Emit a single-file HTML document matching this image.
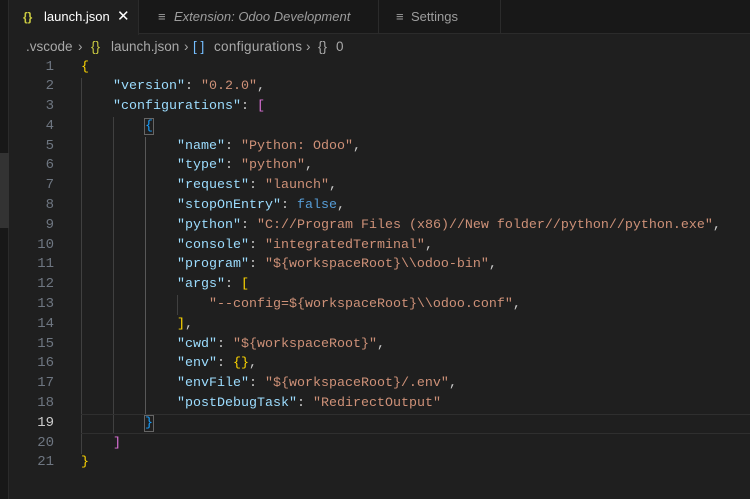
<!DOCTYPE html>
<html><head><style>
*{margin:0;padding:0;box-sizing:border-box}
body{width:750px;height:499px;background:#1f1f1f;overflow:hidden;position:relative;font-family:"Liberation Sans",sans-serif}
.left{position:absolute;left:0;top:0;width:9px;height:499px;background:#181818;border-right:1px solid #2b2b2b}
.sb{position:absolute;left:0;top:153px;width:9px;height:75px;background:#333}
.tabs{position:absolute;left:9px;top:0;width:741px;height:34px;background:#181818;border-bottom:1px solid #2b2b2b}
.tab{position:absolute;top:0;height:34px;font-size:13px;line-height:34px;color:#9d9d9d;border-right:1px solid #2b2b2b}
.t1{left:0;width:130px;background:#1f1f1f;color:#fff;height:35px}
.t2{left:130px;width:240px;font-style:italic}
.t3{left:370px;width:122px}
.br{position:absolute;top:37px;font-size:13.5px;color:#a9a9a9;line-height:20px;white-space:pre}
.br span{position:absolute;top:0}
.y{color:#cbcb41}.bl{color:#75beff}
.code{position:absolute;left:0;top:57.5px;font-family:"Liberation Mono",monospace;font-size:13.33px}
.l{height:19.8px;line-height:19.8px;white-space:pre;position:relative}
.n{position:absolute;left:0;width:54px;text-align:right;color:#6e7681;font-size:14px}
.c{position:absolute;left:81px;color:#ccc}
.k{color:#9cdcfe}.s{color:#ce9178}.b{color:#569cd6}
.g{position:absolute;width:1px;background:#404040}
</style></head><body>
<div class="left"></div><div class="sb"></div>
<div class="tabs">
<div class="tab t1"><span class="y" style="position:absolute;left:14px;font-weight:bold;font-size:12px">{}</span><span style="position:absolute;left:35px">launch.json</span><span style="position:absolute;left:108px;font-size:15px">✕</span></div>
<div class="tab t2"><span style="position:absolute;left:19px">≡</span><span style="position:absolute;left:35px">Extension: Odoo Development</span></div>
<div class="tab t3"><span style="position:absolute;left:17px">≡</span><span style="position:absolute;left:32px">Settings</span></div>
</div>
<div class="br" style="left:0;width:750px;height:20px">
<span style="left:26px">.vscode</span><span style="left:78px">›</span><span class="y" style="left:91px">{}</span><span style="left:111px">launch.json</span><span style="left:184px">›</span><span class="bl" style="left:193px">[ ]</span><span style="left:214px;letter-spacing:0.3px">configurations</span><span style="left:306px">›</span><span style="left:318px">{}</span><span style="left:336px">0</span>
</div>
<div class="g" style="left:81px;top:78px;height:376px"></div>
<div class="g" style="left:113px;top:117px;height:317px"></div>
<div class="g" style="left:145px;top:137px;height:277px;background:#585858"></div>
<div class="g" style="left:177px;top:295px;height:20px"></div>
<div style="position:absolute;left:81px;top:414px;width:669px;height:20px;border-top:1px solid #2f2f2f;border-bottom:1px solid #2f2f2f"></div>
<div class="code">
<div class="l"><span class="n">1</span><span class="c"><span style="color:#ffd700">{</span></span></div>
<div class="l"><span class="n">2</span><span class="c">    <span class="k">"version"</span>: <span class="s">"0.2.0"</span>,</span></div>
<div class="l"><span class="n">3</span><span class="c">    <span class="k">"configurations"</span>: <span style="color:#da70d6">[</span></span></div>
<div class="l"><span class="n">4</span><span class="c">        <span style="color:#179fff;outline:1px solid #666">{</span></span></div>
<div class="l"><span class="n">5</span><span class="c">            <span class="k">"name"</span>: <span class="s">"Python: Odoo"</span>,</span></div>
<div class="l"><span class="n">6</span><span class="c">            <span class="k">"type"</span>: <span class="s">"python"</span>,</span></div>
<div class="l"><span class="n">7</span><span class="c">            <span class="k">"request"</span>: <span class="s">"launch"</span>,</span></div>
<div class="l"><span class="n">8</span><span class="c">            <span class="k">"stopOnEntry"</span>: <span class="b">false</span>,</span></div>
<div class="l"><span class="n">9</span><span class="c">            <span class="k">"python"</span>: <span class="s">"C://Program Files (x86)//New folder//python//python.exe"</span>,</span></div>
<div class="l"><span class="n">10</span><span class="c">            <span class="k">"console"</span>: <span class="s">"integratedTerminal"</span>,</span></div>
<div class="l"><span class="n">11</span><span class="c">            <span class="k">"program"</span>: <span class="s">"${workspaceRoot}\\odoo-bin"</span>,</span></div>
<div class="l"><span class="n">12</span><span class="c">            <span class="k">"args"</span>: <span style="color:#ffd700">[</span></span></div>
<div class="l"><span class="n">13</span><span class="c">                <span class="s">"--config=${workspaceRoot}\\odoo.conf"</span>,</span></div>
<div class="l"><span class="n">14</span><span class="c">            <span style="color:#ffd700">]</span>,</span></div>
<div class="l"><span class="n">15</span><span class="c">            <span class="k">"cwd"</span>: <span class="s">"${workspaceRoot}"</span>,</span></div>
<div class="l"><span class="n">16</span><span class="c">            <span class="k">"env"</span>: <span style="color:#ffd700">{}</span>,</span></div>
<div class="l"><span class="n">17</span><span class="c">            <span class="k">"envFile"</span>: <span class="s">"${workspaceRoot}/.env"</span>,</span></div>
<div class="l"><span class="n">18</span><span class="c">            <span class="k">"postDebugTask"</span>: <span class="s">"RedirectOutput"</span></span></div>
<div class="l"><span class="n" style="color:#ccc">19</span><span class="c">        <span style="color:#179fff;outline:1px solid #666">}</span></span></div>
<div class="l"><span class="n">20</span><span class="c">    <span style="color:#da70d6">]</span></span></div>
<div class="l"><span class="n">21</span><span class="c"><span style="color:#ffd700">}</span></span></div>
</div>
</body></html>
